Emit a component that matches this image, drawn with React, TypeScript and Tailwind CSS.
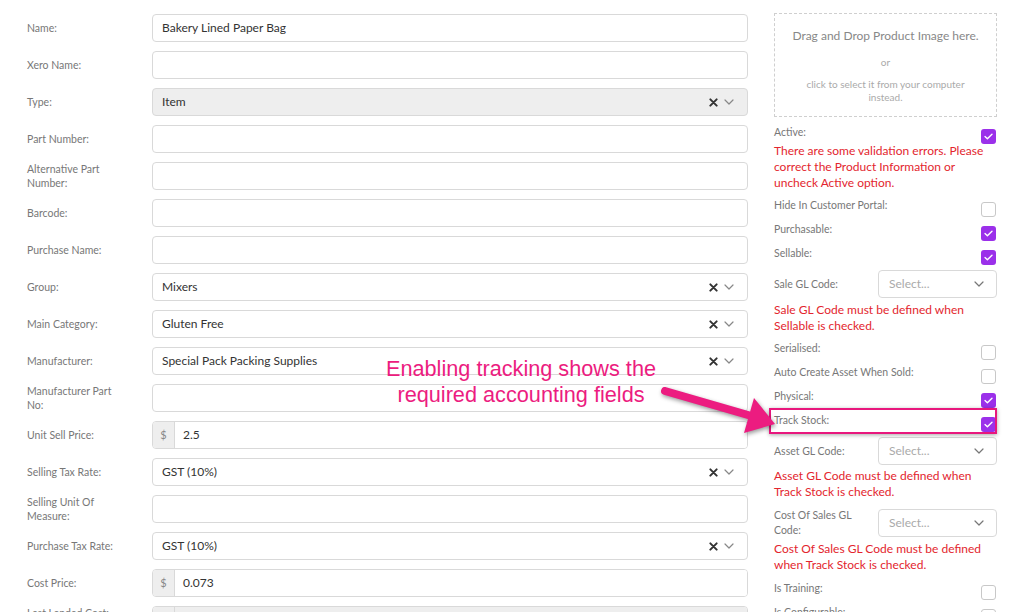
import React from "react";

const font = { fontFamily: "Lato, 'Open Sans', sans-serif" };

function XIcon() {
  return (
    <svg width="9" height="9" viewBox="0 0 10 10" className="shrink-0">
      <path d="M1.5 1.5 L8.5 8.5 M8.5 1.5 L1.5 8.5" stroke="#333" strokeWidth="2.2" strokeLinecap="round" />
    </svg>
  );
}

function Chevron({ color = "#888" }: { color?: string }) {
  return (
    <svg width="10" height="6" viewBox="0 0 10 6" className="shrink-0">
      <path d="M1 1 L5 5 L9 1" stroke={color} strokeWidth="1.2" fill="none" strokeLinecap="round" strokeLinejoin="round" />
    </svg>
  );
}

function TextInput({ value = "" }: { value?: string }) {
  return (
    <div className="h-[28px] w-[596px] rounded-[4px] border border-[#d9d9d9] bg-white px-[9px] flex items-center text-[12px] text-[#333]">
      {value}
    </div>
  );
}

function SelectInput({ value, gray = false }: { value: string; gray?: boolean }) {
  return (
    <div
      className={`h-[28px] w-[596px] rounded-[4px] border border-[#d9d9d9] pl-[9px] pr-[13px] flex items-center text-[12px] text-[#333] ${
        gray ? "bg-[#eeeeee]" : "bg-white"
      }`}
    >
      <span className="flex-1">{value}</span>
      <div className="flex items-center gap-[6px]">
        <XIcon />
        <Chevron />
      </div>
    </div>
  );
}

function MoneyInput({ value, disabled = false }: { value: string; disabled?: boolean }) {
  return (
    <div className="h-[28px] w-[596px] rounded-[4px] border border-[#d9d9d9] flex items-stretch overflow-hidden text-[12px] text-[#333]">
      <div className="w-[22px] bg-[#eeeeee] border-r border-[#d9d9d9] flex items-center justify-center text-[11px] text-[#888]">$</div>
      <div className={`flex-1 flex items-center pl-[8px] ${disabled ? "bg-[#eeeeee]" : "bg-white"}`}>{value}</div>
    </div>
  );
}

function Row({ label, children, top = false }: { label: string; children: React.ReactNode; top?: boolean }) {
  return (
    <div className={`flex h-[28px] ${top ? "items-start" : "items-center"}`}>
      <div className="w-[125px] shrink-0 pr-[30px] text-[10.5px] leading-[14px] text-[#777]">{label}</div>
      {children}
    </div>
  );
}

function Checkbox({ checked }: { checked: boolean }) {
  if (checked) {
    return (
      <div className="w-[15px] h-[15px] rounded-[3px] bg-[#9b30ea] flex items-center justify-center shrink-0">
        <svg width="9" height="7" viewBox="0 0 9 7">
          <path d="M1 3.6 L3.4 5.8 L8 1.2" stroke="white" strokeWidth="1.4" fill="none" strokeLinecap="round" strokeLinejoin="round" />
        </svg>
      </div>
    );
  }
  return <div className="w-[15px] h-[15px] rounded-[3px] border border-[#c8c8c8] bg-white shrink-0" />;
}

function CheckRow({ label, checked, className = "" }: { label: string; checked: boolean; className?: string }) {
  return (
    <div className={`flex justify-between h-[24px] ${className}`}>
      <span className="text-[10.5px] leading-[14px] text-[#777]">{label}</span>
      <div className="mt-[4px] mr-[1px]">
        <Checkbox checked={checked} />
      </div>
    </div>
  );
}

function SmallSelect() {
  return (
    <div className="h-[28px] w-[119px] rounded-[4px] border border-[#d9d9d9] bg-white pl-[10px] pr-[12px] flex items-center justify-between">
      <span className="text-[12px] text-[#aaa]">Select...</span>
      <Chevron color="#777" />
    </div>
  );
}

function SelectRow({ label, className = "" }: { label: string; className?: string }) {
  return (
    <div className={`flex items-center h-[28px] ${className}`}>
      <div className="w-[104px] shrink-0 pr-[22px] text-[10.5px] leading-[15px] text-[#777]">{label}</div>
      <SmallSelect />
    </div>
  );
}

function ErrorText({ children, className = "" }: { children: React.ReactNode; className?: string }) {
  return <div className={`text-[12px] leading-[15.5px] text-[#e3252e] ${className}`}>{children}</div>;
}

export default function App() {
  return (
    <div className="relative w-[1024px] h-[612px] overflow-hidden bg-white" style={font}>
      <div className="flex pl-[27px]">
        {/* Left form */}
        <div className="flex flex-col gap-[9px] pt-[14px]">
          <Row label="Name:"><TextInput value="Bakery Lined Paper Bag" /></Row>
          <Row label="Xero Name:"><TextInput /></Row>
          <Row label="Type:"><SelectInput value="Item" gray /></Row>
          <Row label="Part Number:"><TextInput /></Row>
          <Row label="Alternative Part Number:"><TextInput /></Row>
          <Row label="Barcode:"><TextInput /></Row>
          <Row label="Purchase Name:"><TextInput /></Row>
          <Row label="Group:"><SelectInput value="Mixers" /></Row>
          <Row label="Main Category:"><SelectInput value="Gluten Free" /></Row>
          <Row label="Manufacturer:"><SelectInput value="Special Pack Packing Supplies" /></Row>
          <Row label="Manufacturer Part No:"><TextInput /></Row>
          <Row label="Unit Sell Price:"><MoneyInput value="2.5" /></Row>
          <Row label="Selling Tax Rate:"><SelectInput value="GST (10%)" /></Row>
          <Row label="Selling Unit Of Measure:"><TextInput /></Row>
          <Row label="Purchase Tax Rate:"><SelectInput value="GST (10%)" /></Row>
          <Row label="Cost Price:"><MoneyInput value="0.073" /></Row>
          <Row label="Last Landed Cost:" top><MoneyInput value="" disabled /></Row>
        </div>

        {/* Right column */}
        <div className="w-[223px] ml-[26px] pt-[13px] flex flex-col">
          <div className="h-[104px] border border-dashed border-[#cfcfcf] flex flex-col items-center text-center pt-[14px]">
            <div className="text-[12px] leading-[16px] text-[#888]">Drag and Drop Product Image here.</div>
            <div className="mt-[11px] text-[10px] leading-[14px] text-[#aaa]">or</div>
            <div className="mt-[9px] text-[10px] leading-[13px] text-[#aaa] w-[170px]">click to select it from your computer instead.</div>
          </div>

          <div className="flex justify-between h-[18px] mt-[8px]">
            <span className="text-[10.5px] leading-[14px] text-[#777]">Active:</span>
            <div className="mt-[4px] mr-[1px]"><Checkbox checked /></div>
          </div>
          <ErrorText className="leading-[16px]">
            There are some validation errors. Please correct the Product Information or uncheck Active option.
          </ErrorText>

          <CheckRow label="Hide In Customer Portal:" checked={false} className="mt-[7px]" />
          <CheckRow label="Purchasable:" checked />
          <CheckRow label="Sellable:" checked />
          <SelectRow label="Sale GL Code:" />
          <ErrorText className="mt-[4px]">Sale GL Code must be defined when Sellable is checked.</ErrorText>

          <CheckRow label="Serialised:" checked={false} className="mt-[8px]" />
          <CheckRow label="Auto Create Asset When Sold:" checked={false} />
          <CheckRow label="Physical:" checked />
          <div className="relative">
            <CheckRow label="Track Stock:" checked />
            <div className="absolute left-[-5px] right-[0px] top-[-5px] h-[26px] border-2 border-[#e8177d] shadow-[0_1px_4px_rgba(0,0,0,0.35)] pointer-events-none" />
          </div>
          <SelectRow label="Asset GL Code:" />
          <ErrorText className="mt-[3px]">Asset GL Code must be defined when Track Stock is checked.</ErrorText>

          <SelectRow label="Cost Of Sales GL Code:" className="mt-[10px]" />
          <ErrorText className="mt-[4px] leading-[16px]">Cost Of Sales GL Code must be defined when Track Stock is checked.</ErrorText>

          <CheckRow label="Is Training:" checked={false} className="mt-[8px]" />
          <CheckRow label="Is Configurable:" checked={false} />
        </div>
      </div>

      {/* Annotation */}
      <div
        className="absolute left-[366px] top-[356px] w-[310px] text-center text-[21.7px] leading-[26px] text-[#ec1c80]"
        style={{ fontFamily: "'Liberation Sans', Arial, sans-serif" }}
      >
        Enabling tracking shows the required accounting fields
      </div>
      <svg
        className="absolute left-[650px] top-[378px] drop-shadow-[1px_2px_2px_rgba(0,0,0,0.4)]"
        width="135"
        height="62"
        viewBox="650 378 135 62"
      >
        <path d="M665 391 L748 415" stroke="#ec1c80" strokeWidth="8" strokeLinecap="round" />
        <polygon points="754,398 744,433 775,424" fill="#ec1c80" />
      </svg>
    </div>
  );
}
